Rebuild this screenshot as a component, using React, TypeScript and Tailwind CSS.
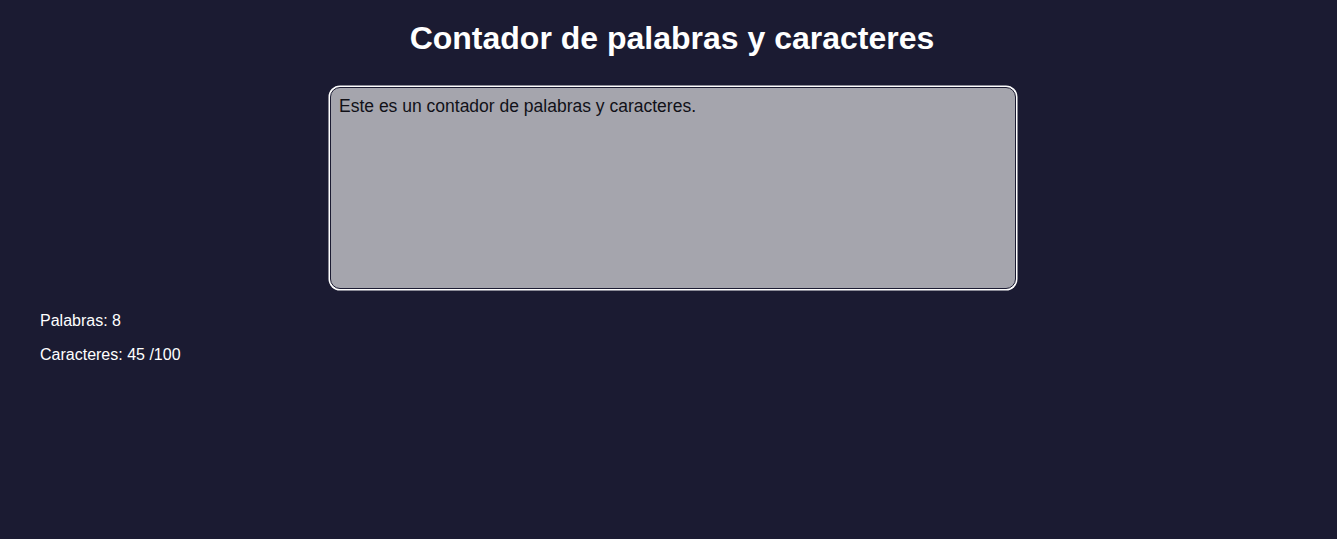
import { useState } from "react";

const MAX = 100;

export default function App() {
  const [text, setText] = useState("Este es un contador de palabras y caracteres.");

  const words = text.trim() === "" ? 0 : text.trim().split(/\s+/).length;

  return (
    <div className="min-h-screen bg-[#1b1b32] text-white font-['Liberation_Sans',Arial,sans-serif] pl-[40px] pr-[33px] flex flex-col items-center">
      <h1 className="mt-[20px] text-[32px] leading-[37px] font-bold">
        Contador de palabras y caracteres
      </h1>
      <textarea
        value={text}
        maxLength={MAX}
        onChange={(e) => setText(e.target.value)}
        className="mt-[30px] ml-[2px] w-[686px] h-[202px] block resize-none rounded-[10px] border border-[#1b1b32] ring-[1.5px] ring-white bg-[#a5a5ad] text-[#111118] text-[17.5px] leading-[20px] px-2 pt-[8px] pb-2 outline-none"
      />
      <div className="self-start mt-[23px] text-[16px]">
        <p className="leading-[18px]">Palabras: {words}</p>
        <p className="leading-[18px] mt-4">
          Caracteres: {text.length} /{MAX}
        </p>
      </div>
    </div>
  );
}
